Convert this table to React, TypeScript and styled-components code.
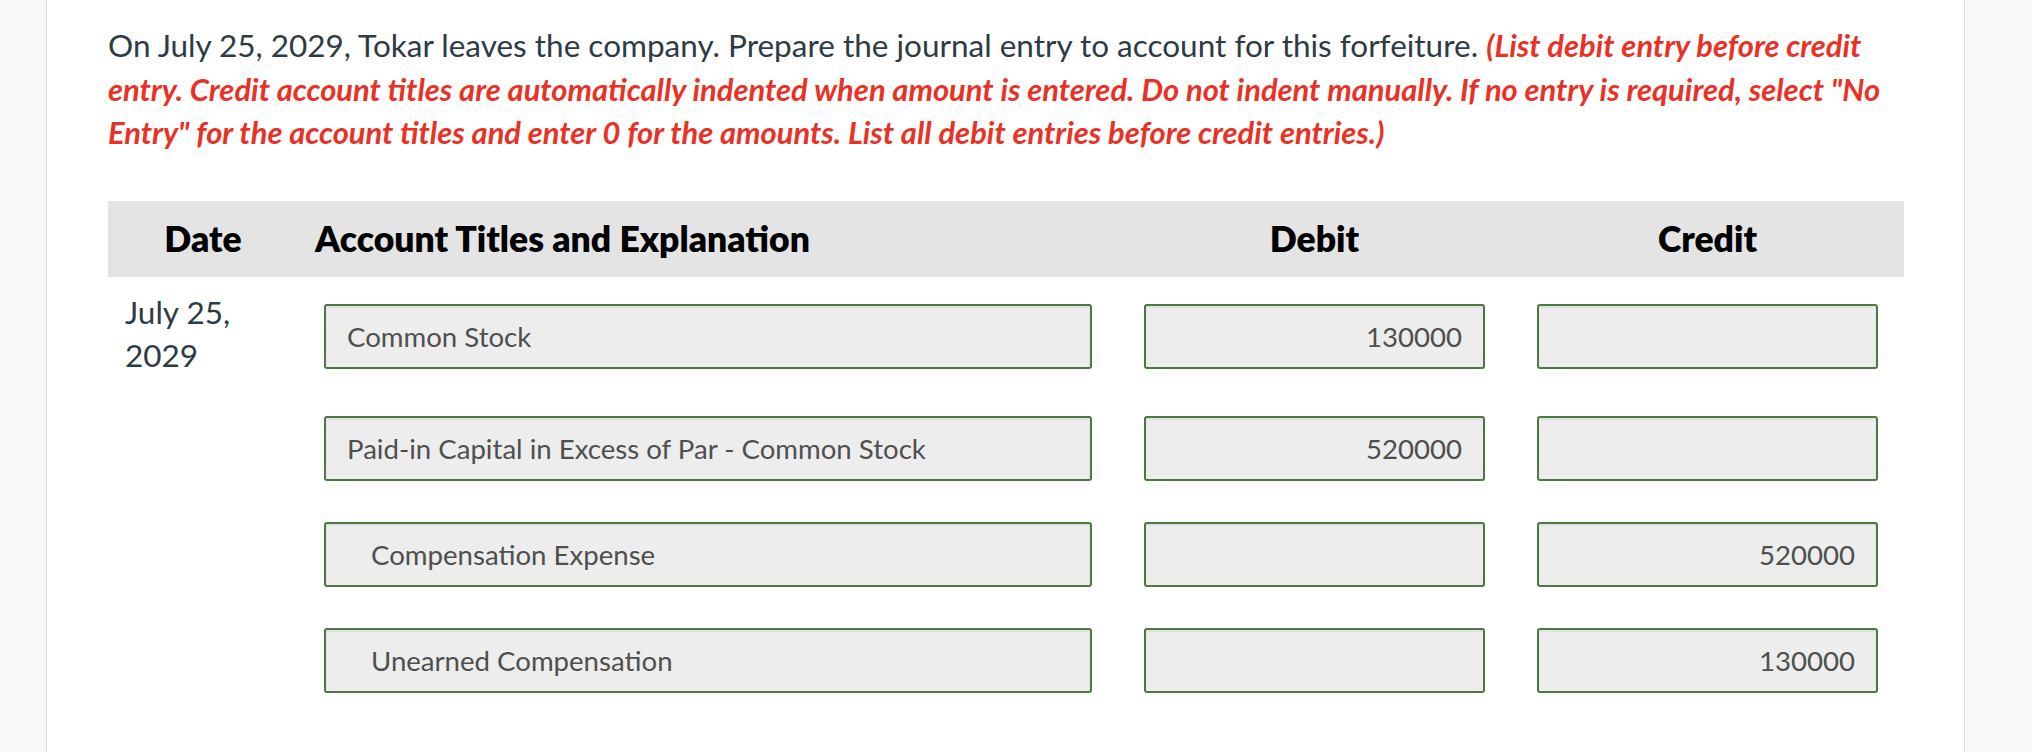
import React from "react";
import styled, { createGlobalStyle } from "styled-components";

const GlobalStyle = createGlobalStyle`
  html, body { margin: 0; padding: 0; background: #ffffff; }
  body { font-family: Lato, "Liberation Sans", sans-serif; }
  * { box-sizing: border-box; }
`;

const Page = styled.div`
  display: grid;
  grid-template-columns: 47px 1fr 68px;
  width: 2032px;
  height: 752px;
  overflow: hidden;
  background: #ffffff;
`;

const SidePanel = styled.div<{ $side: "left" | "right" }>`
  background: #f8f8f8;
  border-right: ${(p) => (p.$side === "left" ? "1px solid #dcdcdc" : "none")};
  border-left: ${(p) => (p.$side === "right" ? "1px solid #dcdcdc" : "none")};
`;

const Main = styled.main`
  padding: 24px 60px 0 61px;
`;

const Question = styled.p`
  margin: 0;
  font-size: 31.5px;
  line-height: 43.5px;
  color: #2d3b45;
`;

const Instruction = styled.span`
  color: #ea3125;
  font-style: italic;
  font-weight: 700;
  font-size: 30.9px;
`;

const Table = styled.div`
  margin-top: 46px;
  display: flex;
  flex-direction: column;
`;

const columns = "190px 820px 393px 393px";

const HeaderRow = styled.div`
  display: grid;
  grid-template-columns: ${columns};
  height: 76px;
  align-items: center;
  background: #e4e4e4;
`;

const HeaderCell = styled.div<{ $align: "left" | "center" }>`
  font-size: 35.5px;
  font-weight: 800;
  color: #000000;
  text-align: ${(p) => p.$align};
  padding: 0 17px;
`;

const Row = styled.div`
  display: grid;
  grid-template-columns: ${columns};
  min-height: 106px;
  align-items: center;
`;

const DateCell = styled.div`
  align-self: start;
  padding: 14px 17px 18px;
  font-size: 31.5px;
  line-height: 43.5px;
  color: #2d3b45;
`;

const FieldCell = styled.div`
  padding: 0 26px;
`;

const Field = styled.div<{ $align: "left" | "right"; $indent?: boolean }>`
  height: 65px;
  display: flex;
  align-items: center;
  justify-content: ${(p) => (p.$align === "right" ? "flex-end" : "flex-start")};
  padding: 0 21px 0 ${(p) => (p.$indent ? "45px" : "21px")};
  background: #ededed;
  border: 2px solid #4b7a40;
  border-radius: 3px;
  box-shadow: inset 0 2px 2px rgba(0, 0, 0, 0.06);
  font-size: 27.6px;
  color: #4f4f4f;
  white-space: nowrap;
`;

type Entry = {
  date?: string[];
  account: string;
  debit: string;
  credit: string;
};

const entries: Entry[] = [
  { date: ["July 25,", "2029"], account: "Common Stock", debit: "130000", credit: "" },
  { account: "Paid-in Capital in Excess of Par - Common Stock", debit: "520000", credit: "" },
  { account: "Compensation Expense", debit: "", credit: "520000" },
  { account: "Unearned Compensation", debit: "", credit: "130000" },
];

export default function App() {
  return (
    <>
      <GlobalStyle />
      <Page>
        <SidePanel $side="left" />
        <Main>
          <Question>
            On July 25, 2029, Tokar leaves the company. Prepare the journal entry to account for this
            forfeiture.{" "}
            <Instruction>
              (List debit entry before credit entry. Credit account titles are automatically indented when
              amount is entered. Do not indent manually. If no entry is required, select "No Entry" for the
              account titles and enter 0 for the amounts. List all debit entries before credit entries.)
            </Instruction>
          </Question>
          <Table>
            <HeaderRow>
              <HeaderCell $align="center">Date</HeaderCell>
              <HeaderCell $align="left">Account Titles and Explanation</HeaderCell>
              <HeaderCell $align="center">Debit</HeaderCell>
              <HeaderCell $align="center">Credit</HeaderCell>
            </HeaderRow>
            {entries.map((e, i) => (
              <Row key={i}>
                <DateCell>
                  {e.date
                    ? e.date.map((d, j) => (
                        <React.Fragment key={j}>
                          {d}
                          {j < e.date!.length - 1 && <br />}
                        </React.Fragment>
                      ))
                    : null}
                </DateCell>
                <FieldCell>
                  <Field $align="left" $indent={e.credit !== ""}>
                    {e.account}
                  </Field>
                </FieldCell>
                <FieldCell>
                  <Field $align="right">{e.debit}</Field>
                </FieldCell>
                <FieldCell>
                  <Field $align="right">{e.credit}</Field>
                </FieldCell>
              </Row>
            ))}
          </Table>
        </Main>
        <SidePanel $side="right" />
      </Page>
    </>
  );
}
